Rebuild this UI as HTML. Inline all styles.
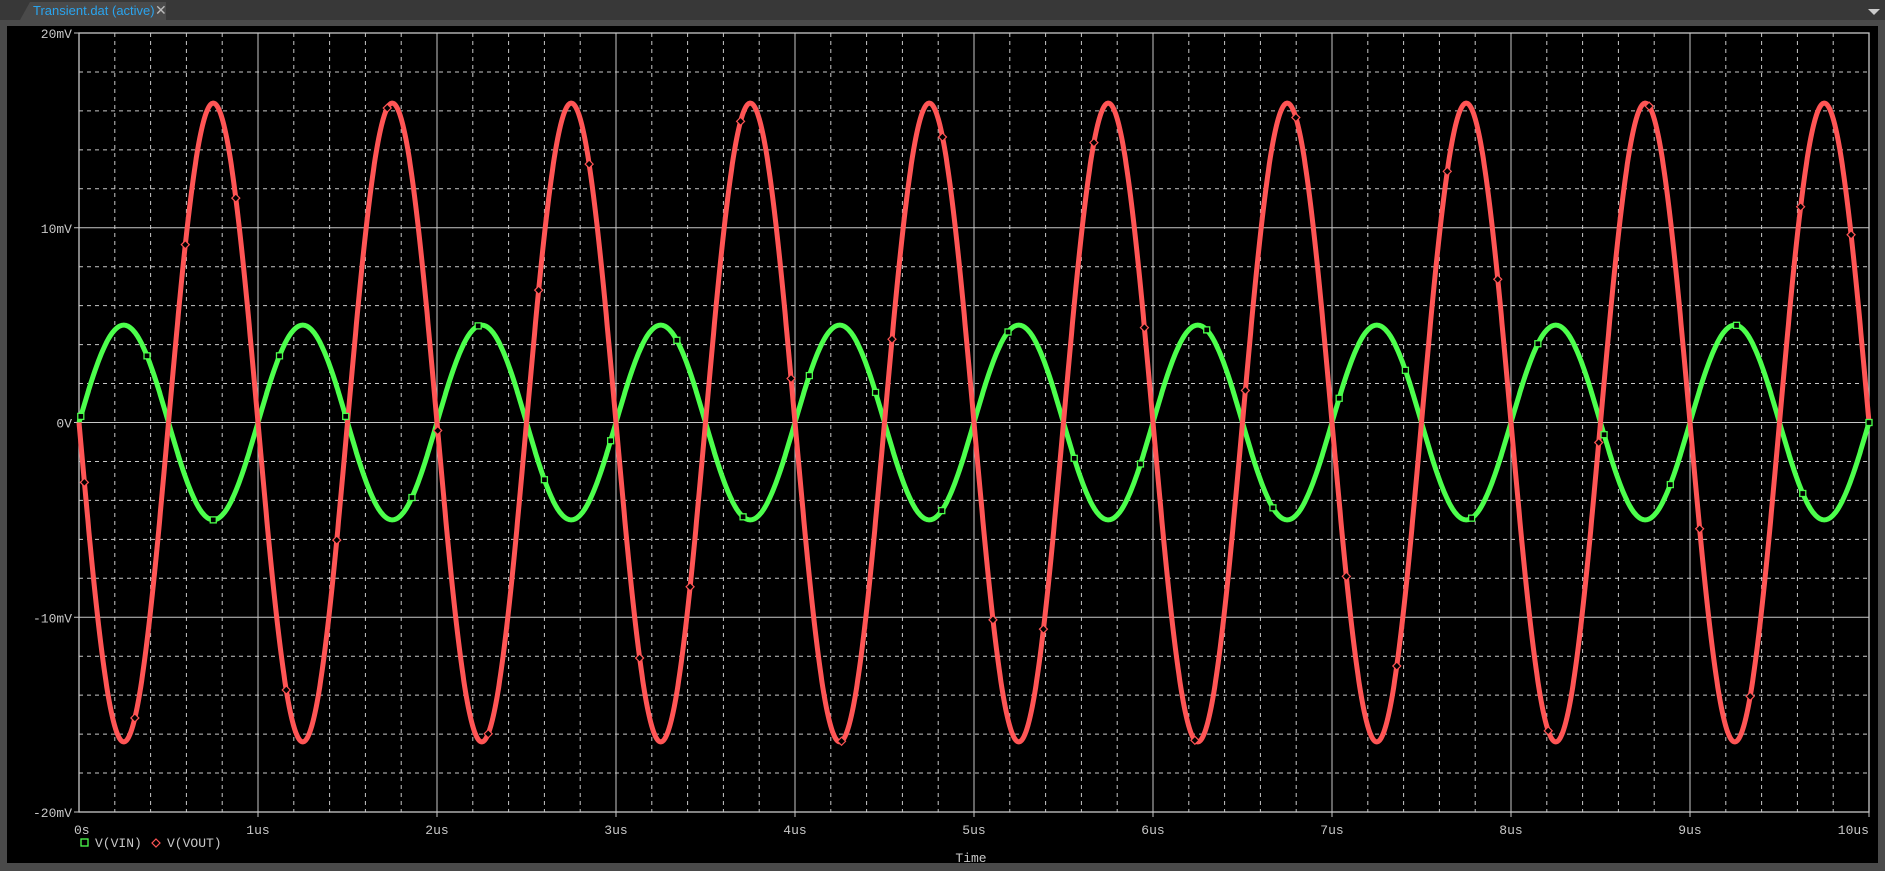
<!DOCTYPE html>
<html><head><meta charset="utf-8">
<style>
html,body{margin:0;padding:0;width:1885px;height:871px;overflow:hidden;background:#4a4a4a;font-family:"Liberation Mono","DejaVu Sans Mono",monospace;}
#top{position:absolute;left:0;top:0;width:1885px;height:20px;background:#383838;}
#strip{position:absolute;left:0;top:20px;width:1885px;height:6px;background:#4a4a4a;}
#tab{position:absolute;left:20px;top:2px;width:146px;height:18px;background:#4a4a4a;clip-path:polygon(10px 0,100% 0,100% 100%,0 100%);}
#tab span{position:absolute;left:13px;top:1px;color:#2aa4ee;font:13px "Liberation Sans",sans-serif;}
#tab b{position:absolute;left:135px;top:0px;color:#bbb;font:14px "Liberation Sans",sans-serif;font-weight:normal}
#plot{position:absolute;left:7px;top:26px;width:1871px;height:837px;background:#000;}
svg{position:absolute;left:0;top:0}
svg text{font-family:"Liberation Mono","DejaVu Sans Mono",monospace;font-size:13px;fill:#c8c8c8;}
</style></head><body>
<div id="top"></div><div id="strip"></div>
<div id="tab"><span>Transient.dat (active)</span><b>✕</b></div>
<svg width="1885" height="30" style="z-index:2"><polygon points="1868,9 1880,9 1874,15" fill="#ccc"/></svg>
<div id="plot"></div>
<svg id="s" width="1885" height="871"></svg>
<script>
var s=document.getElementById('s'),h='';
var L=79,R=1869,T=33,B=812,Z=422.5,px=179,py=19.475;
function X(t){return L+t*px}function Y(v){return Z-v*py}
for(var i=1;i<50;i++){if(i%5==0)continue;var x=X(i*0.2);h+='<line x1="'+x+'" y1="'+T+'" x2="'+x+'" y2="'+B+'" stroke="#c8c8c8" stroke-width="1" stroke-dasharray="4,4"/>';}
for(var v=-18;v<=18;v+=2){if(v%10==0)continue;var y=Y(v);h+='<line x1="'+L+'" y1="'+y+'" x2="'+R+'" y2="'+y+'" stroke="#c8c8c8" stroke-width="1" stroke-dasharray="4,4"/>';}
for(var i=1;i<10;i++){var x=X(i);h+='<line x1="'+x+'" y1="'+T+'" x2="'+x+'" y2="'+(B+5)+'" stroke="#c8c8c8" stroke-width="1"/>';}
[-10,0,10].forEach(function(v){var y=Y(v);h+='<line x1="'+(L-5)+'" y1="'+y+'" x2="'+R+'" y2="'+y+'" stroke="#c8c8c8" stroke-width="1"/>';});
h+='<rect x="'+L+'" y="'+T+'" width="'+(R-L)+'" height="'+(B-T)+'" fill="none" stroke="#c8c8c8" stroke-width="1.3"/>';
h+='<line x1="'+(L-5)+'" y1="'+T+'" x2="'+L+'" y2="'+T+'" stroke="#c8c8c8"/><line x1="'+(L-5)+'" y1="'+B+'" x2="'+L+'" y2="'+B+'" stroke="#c8c8c8"/>';
h+='<line x1="'+R+'" y1="'+B+'" x2="'+R+'" y2="'+(B+5)+'" stroke="#c8c8c8"/>';
[[20,'20mV'],[10,'10mV'],[0,'0V'],[-10,'-10mV'],[-20,'-20mV']].forEach(function(a){h+='<text x="'+(L-7)+'" y="'+(Y(a[0])+5)+'" text-anchor="end">'+a[1]+'</text>';});
for(var i=0;i<=10;i++){var lab=i==0?'0s':i+'us';var anc=i==0?'start':(i==10?'end':'middle');h+='<text x="'+(i==0?L-5:X(i))+'" y="'+(B+22)+'" text-anchor="'+anc+'">'+lab+'</text>';}
h+='<text x="971" y="862" text-anchor="middle">Time</text>';
h+='<rect x="81" y="839" width="7" height="7" fill="none" stroke="#4cff4c" stroke-width="1.3"/><text x="95" y="847">V(VIN)</text>';
h+='<polygon points="156,839 160,843 156,847 152,843" fill="none" stroke="#ff5555" stroke-width="1.2"/><text x="167" y="847">V(VOUT)</text>';
function path(a,col){var d='';for(var t=0;t<=10.0001;t+=0.005){d+=(t==0?'M':'L')+X(t).toFixed(1)+','+Y(a*Math.sin(2*Math.PI*t)).toFixed(1);}return '<path d="'+d+'" fill="none" stroke="'+col+'" stroke-width="5" stroke-linejoin="round"/>';}
h+=path(5,'#4cff4c');h+=path(-16.4,'#ff5555');
for(var k=0;k<28;k++){var t=k*0.37+0.01;if(t>10)break;var x=X(t),y=Y(5*Math.sin(2*Math.PI*t));h+='<rect x="'+(x-3)+'" y="'+(y-3)+'" width="6" height="6" fill="#000" stroke="#4cff4c" stroke-width="1.3"/>';}
for(var k=0;k<36;k++){var t=k*0.282+0.03;if(t>10)break;var x=X(t),y=Y(-16.4*Math.sin(2*Math.PI*t));h+='<polygon points="'+x+','+(y-4)+' '+(x+4)+','+y+' '+x+','+(y+4)+' '+(x-4)+','+y+'" fill="#000" stroke="#ff5555" stroke-width="1.2"/>';}
s.innerHTML=h;
</script>
</body></html>
